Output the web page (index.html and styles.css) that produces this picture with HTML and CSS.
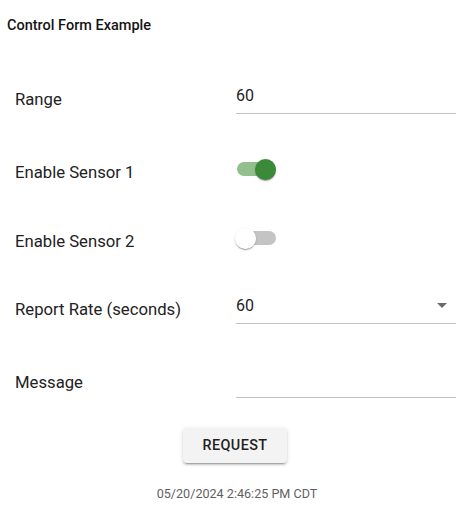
FILE: index.html
```html
<!DOCTYPE html>
<html lang="en">
<head>
<meta charset="utf-8">
<title>Control Form Example</title>
<link rel="stylesheet" href="styles.css">
</head>
<body>
<h1 class="title">Control Form Example</h1>
<form class="form">
  <div class="label">Range</div>
  <div class="field"><input class="text-input" type="text" value="60"></div>

  <div class="label">Enable Sensor 1</div>
  <div class="switch-cell"><span class="switch on"><span class="track"></span><span class="thumb"></span></span></div>

  <div class="label">Enable Sensor 2</div>
  <div class="switch-cell"><span class="switch"><span class="track"></span><span class="thumb"></span></span></div>

  <div class="label">Report Rate (seconds)</div>
  <div class="field select">
    <span class="select-value">60</span>
    <svg class="arrow" width="10" height="5" viewBox="0 0 10 5"><path d="M0 0l5 5 5-5z" fill="#6b6b6b"/></svg>
  </div>

  <div class="label">Message</div>
  <div class="field"><input class="text-input" type="text" value=""></div>
</form>
<div class="actions">
  <button class="btn" type="button">REQUEST</button>
  <div class="stamp">05/20/2024 2:46:25 PM CDT</div>
</div>
</body>
</html>
```

FILE: styles.css
```css
html, body {
  margin: 0;
  padding: 0;
  background: #ffffff;
}
body {
  font-family: Roboto, "Liberation Sans", Arial, sans-serif;
  color: #222222;
}
.title {
  margin: 0;
  padding: 16px 7px 0 7px;
  font-size: 14.5px;
  line-height: 20px;
  font-weight: 500;
  color: #151515;
}
.form {
  margin-top: 28px;
  padding: 0 18px 0 15px;
  display: grid;
  grid-template-columns: 221px 1fr;
  grid-template-rows: 72px 74px 64px 72px 74px;
}
.label {
  align-self: center;
  font-size: 16.7px;
  line-height: 24px;
  color: #222222;
}
.field {
  align-self: end;
  margin-bottom: 22px;
  border-bottom: 1px solid #c2c2c2;
  padding-bottom: 5px;
  height: 24px;
}
.text-input {
  display: block;
  width: 100%;
  box-sizing: border-box;
  border: none;
  outline: none;
  padding: 0;
  margin: 0;
  background: transparent;
  font-family: inherit;
  font-size: 16px;
  line-height: 24px;
  height: 24px;
  color: #222222;
}
.select {
  display: flex;
  align-items: center;
  justify-content: space-between;
  padding-right: 9px;
}
.select-value {
  font-size: 16px;
  line-height: 24px;
}
.arrow {
  display: block;
  margin-top: -2px;
}
.switch-cell {
  align-self: center;
  margin-bottom: 9px;
  margin-left: -1px;
  height: 20px;
}
.switch {
  position: relative;
  display: block;
  width: 41px;
  height: 21px;
}
.track {
  position: absolute;
  left: 2px;
  right: 0;
  top: 3.5px;
  height: 14px;
  border-radius: 7px;
  background: #c4c4c4;
}
.thumb {
  position: absolute;
  left: 0;
  top: 0;
  width: 21px;
  height: 21px;
  border-radius: 50%;
  background: #ffffff;
  box-shadow: 0 2px 1px -1px rgba(0,0,0,0.2), 0 1px 1px rgba(0,0,0,0.14), 0 1px 3px rgba(0,0,0,0.12);
}
.switch.on .track {
  background: #93bf8f;
}
.switch.on .thumb {
  left: 20px;
  background: #3b8a3a;
}
.actions {
  display: flex;
  flex-direction: column;
  align-items: center;
  padding-top: 8px;
}
.btn {
  width: 104px;
  height: 35px;
  margin-right: 4px;
  border: none;
  border-radius: 4px;
  background: #f3f3f3;
  box-shadow: 0 3px 1px -2px rgba(0,0,0,0.2), 0 2px 2px rgba(0,0,0,0.14), 0 1px 5px rgba(0,0,0,0.12);
  font-family: inherit;
  font-size: 14.4px;
  font-weight: 500;
  letter-spacing: 0.4px;
  color: #1f1f1f;
  padding: 0;
}
.stamp {
  margin-top: 23px;
  font-size: 12.6px;
  line-height: 16px;
  color: #5f5f5f;
}
```
